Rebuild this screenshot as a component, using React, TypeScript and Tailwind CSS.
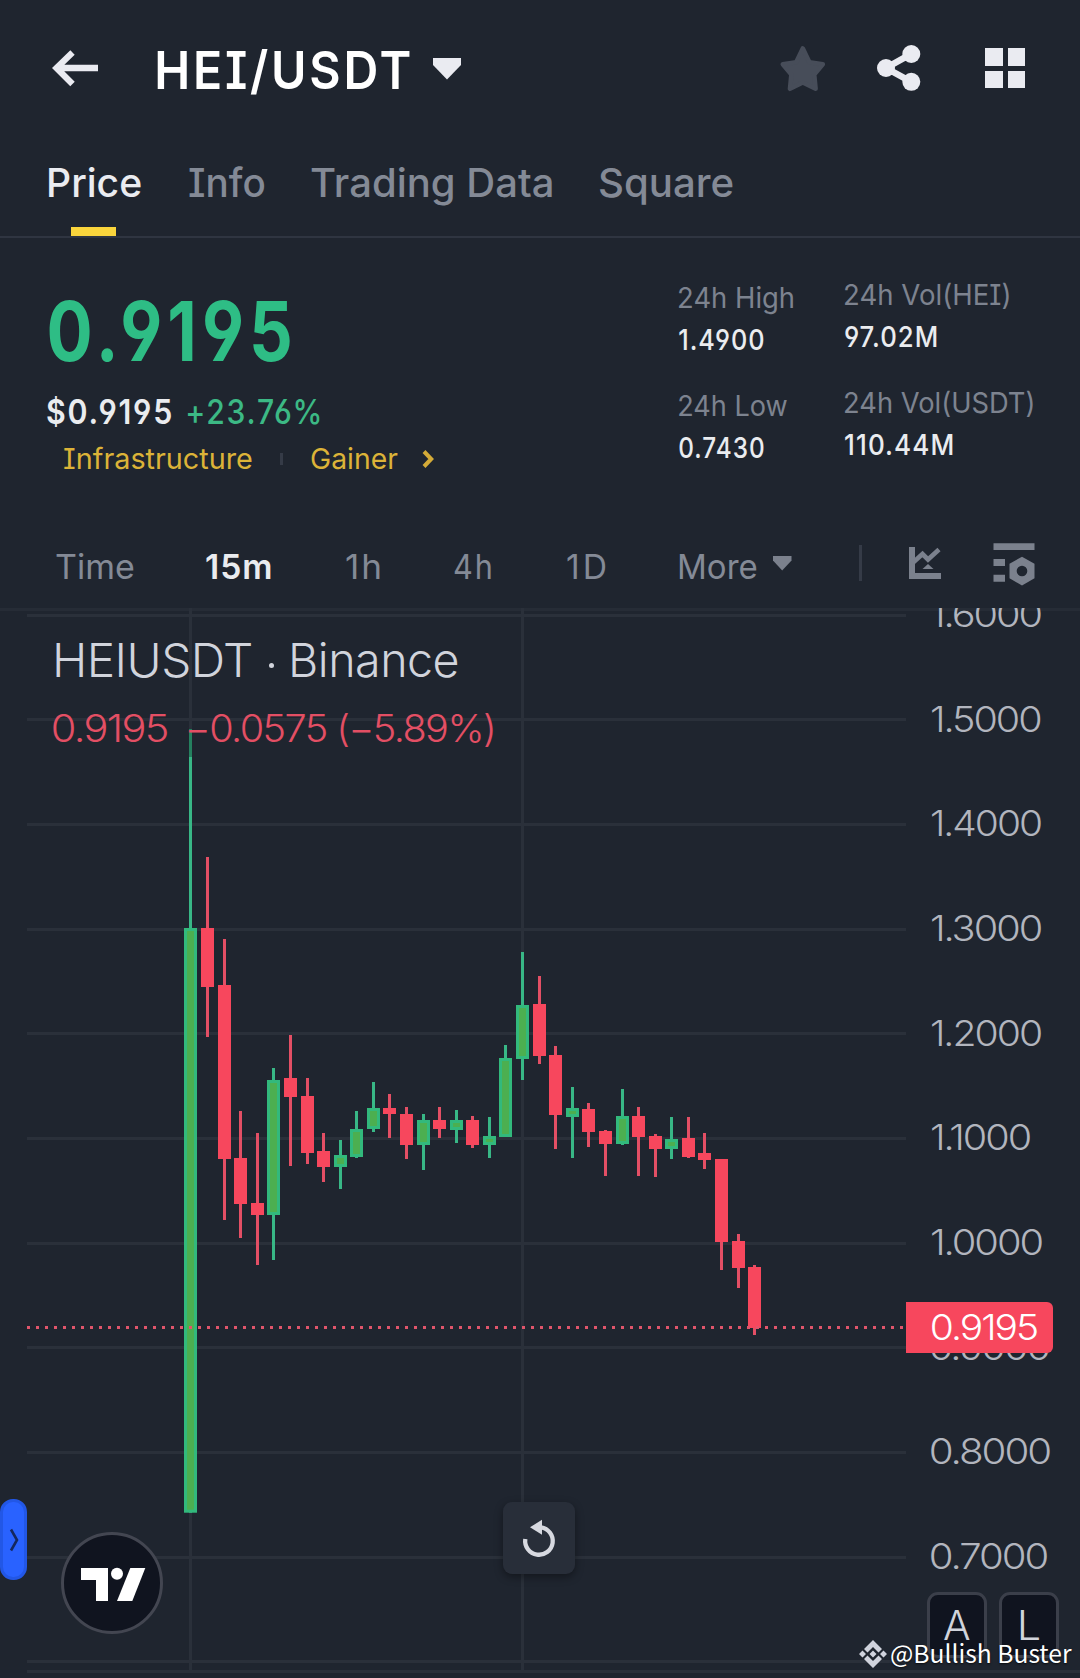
import { useLayoutEffect, useRef, type ReactNode } from "react";

/** Single line of text whose visible glyphs span exactly the width of its box. */
function Fit({ className = "", children }: { className?: string; children: string }) {
  const box = useRef<HTMLDivElement>(null);
  const text = useRef<HTMLSpanElement>(null);

  useLayoutEffect(() => {
    const b = box.current;
    const t = text.current;
    if (!b || !t) return;
    const cs = getComputedStyle(t);
    const ctx = document.createElement("canvas").getContext("2d");
    if (!ctx) return;
    ctx.font = `${cs.fontWeight} ${cs.fontSize} ${cs.fontFamily}`;
    const first = ctx.measureText(children[0]);
    const last = ctx.measureText(children[children.length - 1]);
    const spacing = parseFloat(cs.letterSpacing) || 0;
    const left = -first.actualBoundingBoxLeft;
    const right = last.width - last.actualBoundingBoxRight;
    t.style.transform = "none";
    const ink = t.getBoundingClientRect().width - spacing - left - right;
    const scale = b.getBoundingClientRect().width / ink;
    t.style.transform = `scaleX(${scale}) translateX(${-left}px)`;
  }, [children]);

  return (
    <div ref={box} className={`shrink-0 whitespace-pre ${className}`}>
      <span ref={text} className="inline-block origin-left">
        {children}
      </span>
    </div>
  );
}

const sans = "font-['Inter',sans-serif] [font-feature-settings:'cv08','cv03','cv04']";

type Candle = [x: number, high: number, top: number, bottom: number, low: number, up: 0 | 1];

const candles: Candle[] = [
  [190.5, 757, 928, 1512.7, 1512.7, 1],
  [207.5, 857, 928, 987, 1037, 0],
  [224.5, 939, 985, 1159, 1220, 0],
  [240.5, 1111, 1158, 1204, 1238, 0],
  [257.5, 1133, 1203, 1215, 1265, 0],
  [273.5, 1068, 1080, 1215, 1260, 1],
  [290.5, 1035, 1078, 1097, 1166, 0],
  [307.5, 1078, 1096, 1153, 1164, 0],
  [323.5, 1133, 1151, 1167, 1182, 0],
  [340.5, 1140, 1155, 1167, 1189, 1],
  [356.5, 1111, 1129, 1157, 1158, 1],
  [373.5, 1082, 1108, 1129, 1132, 1],
  [389.5, 1094, 1108, 1114, 1138, 0],
  [406.5, 1107, 1114, 1145, 1159, 0],
  [423.5, 1114, 1120, 1145, 1170, 1],
  [439.5, 1107, 1120, 1129, 1138, 0],
  [456.5, 1110, 1120, 1130, 1143, 1],
  [472.5, 1116, 1120, 1145, 1148, 0],
  [489.5, 1117, 1136, 1145, 1158, 1],
  [505.5, 1045, 1058, 1137, 1137, 1],
  [522.5, 952, 1005, 1059, 1080, 1],
  [539.5, 976, 1004, 1056, 1064, 0],
  [555.5, 1046, 1055, 1115, 1149, 0],
  [572.5, 1087, 1108, 1117, 1158, 1],
  [588.5, 1103, 1109, 1132, 1147, 0],
  [605.5, 1130, 1131, 1144, 1176, 0],
  [622.5, 1089, 1116, 1144, 1145, 1],
  [638.5, 1107, 1116, 1137, 1176, 0],
  [655.5, 1134, 1136, 1149, 1177, 0],
  [671.5, 1117, 1139, 1149, 1159, 1],
  [688.5, 1117, 1138, 1157, 1158, 0],
  [704.5, 1133, 1153, 1160, 1169, 0],
  [721.5, 1159, 1159, 1242, 1270, 0],
  [738.5, 1234, 1241, 1268, 1288, 0],
  [754.5, 1265, 1267, 1328, 1335, 0],
];

const gridRows = [615.5, 719.5, 824.5, 929.5, 1033.5, 1138.5, 1243.5, 1347.5, 1452.5, 1557.5, 1661.5];

function Chart() {
  return (
    <svg className="absolute inset-0" width="1080" height="1070" viewBox="0 608 1080 1070">
      <rect x="0" y="608" width="1080" height="3" fill="#262c36" />
      {gridRows.map((y) => (
        <rect key={y} x="27" y={y - 1.5} width="879" height="3" fill="#2a303a" />
      ))}
      <rect x="27" y="1670" width="1053" height="3" fill="#2a303a" />
      <rect x="189" y="608" width="3" height="1062" fill="#2a303a" />
      <rect x="521" y="608" width="3" height="1062" fill="#2a303a" />
      <rect x="189" y="729" width="3" height="28" fill="#25805f" />
      {candles.map(([x, high, top, bottom, low, up]) => (
        <g key={x}>
          <rect x={x - 1.5} y={high} width="3" height={low - high} fill={up ? "#38b786" : "#e34f65"} />
          <rect x={x - 6.5} y={top} width="13" height={bottom - top} fill={up ? "#32b97c" : "#f7475d"} />
          {up === 1 && (
            <rect x={x - 3.5} y={top + 3} width="7" height={Math.max(bottom - top - 6, 2)} fill="#4caf50" />
          )}
        </g>
      ))}
      <path d="M27 1327.5H905" stroke="#e0556b" strokeWidth="3" strokeDasharray="3 6" />
    </svg>
  );
}

function Tab({ children, className }: { children: string; className: string }) {
  return (
    <Fit className={`mt-[1px] h-[29px] text-[39.5px] leading-[29px] font-medium ${className}`}>{children}</Fit>
  );
}

function Stat({ label, value, labelWidth, valueWidth }: { label: string; value: string; labelWidth: string; valueWidth: string }) {
  return (
    <div className="flex h-[63px] flex-col justify-between">
      <Fit className={`h-[21px] text-[29px] leading-[21px] text-[#7d838f] ${labelWidth}`}>{label}</Fit>
      <Fit className={`h-[21px] text-[29px] leading-[21px] font-medium tracking-[1.2px] text-[#eaecef] ${valueWidth}`}>
        {value}
      </Fit>
    </div>
  );
}

function Interval({ children, className }: { children: string; className: string }) {
  return <Fit className={`mt-[54px] h-[25px] text-[34px] leading-[25px] ${className}`}>{children}</Fit>;
}

const axis: [string, string][] = [
  ["1.6000", "w-[110px]"],
  ["1.5000", "w-[109.5px]"],
  ["1.4000", "w-[110px]"],
  ["1.3000", "w-[110px]"],
  ["1.2000", "w-[110px]"],
  ["1.1000", "w-[99px]"],
  ["1.0000", "w-[111px]"],
  ["0.9000", "w-[118px]"],
  ["0.8000", "w-[119px]"],
  ["0.7000", "w-[116px]"],
];

function ScaleButton({ children }: { children: ReactNode }) {
  return (
    <div className="flex h-[66px] w-[60px] items-center justify-center rounded-[11px] border-3 border-[#3b3f4a] bg-[#10141f] pb-[1px] text-[#d1d4dc]">
      {children}
    </div>
  );
}

export default function App() {
  return (
    <div className={`flex h-[1678px] w-[1080px] flex-col overflow-hidden bg-[#1f252f] ${sans}`}>
      <header className="flex h-[168px] items-start">
        <svg className="mt-[49px] ml-[50px]" width="50" height="38" viewBox="50 49 50 38">
          <path d="M98 68H57M72.5 52.5L56.5 68L72.5 84" fill="none" stroke="#eaebf1" strokeWidth="6.3" />
        </svg>
        <Fit className="mt-[51px] ml-[57px] h-[38px] w-[253px] text-[52.3px] leading-[38px] font-semibold tracking-[3px] text-white">
          HEI/USDT
        </Fit>
        <svg className="mt-[58px] ml-[23px]" width="28" height="22" viewBox="0 0 28 22">
          <path d="M0 0H28V7L14 21.5L0 7Z" fill="#eaebf1" />
        </svg>
        <svg className="mt-[45px] ml-[317px]" width="50" height="48" viewBox="778 45 50 48">
          <path
            d="M802.8 48.5L809.4 62.2L822.8 64.2L814.2 74.6L815.6 88.8L802.8 82.5L790 88.8L791.4 74.6L782.8 64.2L796.2 62.2Z"
            fill="#474d59"
            stroke="#474d59"
            strokeWidth="4.6"
            strokeLinejoin="round"
          />
        </svg>
        <svg className="mt-[44px] ml-[47px]" width="48" height="48" viewBox="875 44 48 48">
          <path d="M911.3 53.8L886 68L911.3 81.9" fill="none" stroke="#eaebf1" strokeWidth="6.5" />
          <circle cx="886" cy="68" r="9" fill="#eaebf1" />
          <circle cx="911.3" cy="54" r="9" fill="#eaebf1" />
          <circle cx="911.3" cy="81.8" r="9" fill="#eaebf1" />
        </svg>
        <div className="mt-[48px] ml-[62px] grid h-[40px] w-[40px] grid-cols-2 gap-[5px]">
          <div className="bg-[#eaebf1]" />
          <div className="bg-[#eaebf1]" />
          <div className="bg-[#eaebf1]" />
          <div className="bg-[#eaebf1]" />
        </div>
      </header>

      <nav className="flex h-[70px] items-start border-b-2 border-[#2f3541] pl-[49px] text-[#848a96]">
        <div className="flex w-[92px] flex-col">
          <Tab className="w-[92px] text-[#eaecf1]">Price</Tab>
          <div className="mt-[29px] ml-[22px] h-[9px] w-[45px] bg-[#fad53c]" />
        </div>
        <Tab className="ml-[50px] w-[73px]">Info</Tab>
        <Tab className="ml-[47px] w-[241px]">Trading Data</Tab>
        <Tab className="ml-[48px] w-[133px]">Square</Tab>
      </nav>

      <section className="flex h-[262px] items-start">
        <div className="flex w-[679px] flex-col items-start pt-[64px]">
          <Fit className="ml-[49px] h-[60px] w-[241px] text-[82px] leading-[60px] font-bold tracking-[6px] text-[#2ebd85]">
            0.9195
          </Fit>
          <div className="mt-[37px] ml-[46.5px] flex h-[25px] gap-[17px]">
            <Fit className="w-[124px] text-[34px] leading-[25px] font-semibold tracking-[2px] text-[#eaecef]">$0.9195</Fit>
            <Fit className="w-[132px] text-[34px] leading-[25px] font-medium tracking-[2px] text-[#3cb985]">+23.76%</Fit>
          </div>
          <div className="mt-[24px] ml-[65px] flex h-[21px] items-center text-[29px] leading-[21px] text-[#dcb338]">
            <Fit className="w-[187px]">Infrastructure</Fit>
            <div className="ml-[28px] h-[12px] w-[3px] bg-[#353b47]" />
            <Fit className="ml-[28px] w-[87px]">Gainer</Fit>
            <svg className="ml-[24px]" width="13" height="18" viewBox="0 0 13 18">
              <path d="M2 1.5L9.2 9L2 16.5" fill="none" stroke="#d4ab38" strokeWidth="4" />
            </svg>
          </div>
        </div>
        <div className="flex w-[166px] flex-col gap-[45px] pt-[49px]">
          <Stat label="24h High" value="1.4900" labelWidth="w-[114px]" valueWidth="w-[85px]" />
          <Stat label="24h Low" value="0.7430" labelWidth="w-[108px]" valueWidth="w-[85px]" />
        </div>
        <div className="flex flex-col gap-[45px] pt-[46px]">
          <Stat label="24h Vol(HEI)" value="97.02M" labelWidth="w-[164px]" valueWidth="w-[92px]" />
          <Stat label="24h Vol(USDT)" value="110.44M" labelWidth="w-[188px]" valueWidth="w-[108px]" />
        </div>
      </section>

      <div className="flex h-[108px] items-start text-[#848a96]">
        <Interval className="ml-[56px] w-[78px]">Time</Interval>
        <Interval className="ml-[72px] w-[65px] font-semibold tracking-[1px] text-[#eaecef]">15m</Interval>
        <Interval className="ml-[75px] w-[34px] tracking-[2px]">1h</Interval>
        <Interval className="ml-[73.5px] w-[37px] tracking-[2px]">4h</Interval>
        <Interval className="ml-[76px] w-[38.5px] tracking-[3px]">1D</Interval>
        <Interval className="ml-[74px] w-[78px]">More</Interval>
        <svg className="mt-[56px] ml-[16px]" width="19" height="15" viewBox="0 0 19 15">
          <path d="M0 0H18.5V4.5L9.2 14.5L0 4.5Z" fill="#7b818d" />
        </svg>
        <div className="mt-[45px] ml-[67px] h-[36px] w-[3px] bg-[#353b47]" />
        <svg className="mt-[45px] ml-[45px]" width="36" height="36" viewBox="907 545 36 36" fill="#7b818d">
          <path d="M909 547H915V573H941V579H909Z" />
          <path d="M912 563.5L922.5 554L928 559.5L939 549.5" fill="none" stroke="#7b818d" strokeWidth="4.6" />
          <path d="M928 564L933.5 569H922.5Z" />
        </svg>
        <svg className="mt-[42px] ml-[49px]" width="44" height="45" viewBox="992 542 44 45" fill="#7b818d">
          <path d="M993.5 543.3H1034.5V550H993.5ZM993.5 559H1005V566H993.5ZM993.5 574.7H1005V581.7H993.5Z" />
          <path
            fillRule="evenodd"
            d="M1022 556.7L1034.5 563.7V578.3L1022 585.5L1009.5 578.3V563.7ZM1022 565.7A5.3 5.3 0 1 0 1022 576.3A5.3 5.3 0 1 0 1022 565.7Z"
          />
        </svg>
      </div>

      <main className="relative flex h-[1070px] overflow-hidden">
        <Chart />

        <div className="relative flex w-[931px] flex-col pt-[35px] [font-feature-settings:normal]">
          <div className="ml-[56px] flex h-[34px] items-center text-[46.8px] leading-[34px] font-light tracking-[-0.5px] text-[#d1d4dc]">
            <Fit className="w-[195.5px]">HEIUSDT</Fit>
            <div className="mt-[10px] ml-[17px] h-[5px] w-[5px] rounded-full bg-[#d1d4dc]" />
            <Fit className="ml-[18.5px] w-[165.5px]">Binance</Fit>
          </div>
          <div className="mt-[37.5px] ml-[52.5px] flex h-[27px] gap-[21.5px] text-[37.5px] leading-[27px] font-light tracking-[-1.5px] text-[#e34f64]">
            <Fit className="w-[114px]">0.9195</Fit>
            <Fit className="w-[304.5px]">−0.0575 (−5.89%)</Fit>
          </div>
        </div>

        <div className="relative mt-[-45.3px] flex flex-col font-light tracking-[-1.8px] text-[#b2b5be] [font-feature-settings:normal]">
          {axis.map(([label, width]) => (
            <div key={label} className="flex h-[104.65px] shrink-0 items-center">
              <Fit className={`h-[26px] text-[35.5px] leading-[26px] ${width}`}>{label}</Fit>
            </div>
          ))}
        </div>

        <div className="absolute top-[694px] left-[906px] flex h-[51px] w-[147px] items-center rounded-r-[6px] bg-[#f7475d] pl-[25.5px]">
          <Fit className="h-[26px] w-[105px] text-[35.5px] leading-[26px] font-light tracking-[-1.8px] text-white [font-feature-settings:normal]">
            0.9195
          </Fit>
        </div>

        <div className="absolute top-[984px] left-[927px] flex gap-[12px] text-[41px] leading-[30px] font-light">
          <ScaleButton>
            <Fit className="w-[26px]">A</Fit>
          </ScaleButton>
          <ScaleButton>
            <Fit className="w-[19px]">L</Fit>
          </ScaleButton>
        </div>

        <div className="absolute top-[894px] left-[503px] h-[72px] w-[72px] rounded-[9px] bg-[#282e39] shadow-[0_3px_9px_rgba(0,0,0,0.4)]">
          <svg width="72" height="72" viewBox="503 1502 72 72">
            <path d="M525.3 1539A13.8 13.8 0 1 0 541 1527.3" fill="none" stroke="#d7d9e0" strokeWidth="4.3" />
            <path d="M530 1527.3L542 1519.8V1534.8Z" fill="#d7d9e0" />
          </svg>
        </div>

        <div className="absolute top-[891px] left-0 flex h-[81px] w-[27px] items-center justify-center rounded-[13px] border-3 border-[#2257e6] bg-[#2962ff]">
          <svg width="10" height="24" viewBox="0 0 10 24">
            <path d="M2 1.5L8 12L2 22.5" fill="none" stroke="#14275f" strokeWidth="2.6" />
          </svg>
        </div>

        <div className="absolute top-[924px] left-[61px] h-[102px] w-[102px] rounded-full border-3 border-[#434651] bg-[#10141f]">
          <svg width="96" height="96" viewBox="64 1535 96 96" fill="#fff">
            <path d="M81 1568H108V1601H96V1580H81Z" />
            <circle cx="117" cy="1573.8" r="6" />
            <path d="M130.3 1568H145.3L132.3 1601H117Z" />
          </svg>
        </div>

        <div className="absolute top-[1031px] left-[858px] flex items-center">
          <svg width="30" height="30" viewBox="0 0 30 30" fill="#d0d3dd">
            <path d="M15 1L24 10L20.5 13.5L15 8L9.5 13.5L6 10ZM15 29L24 20L20.5 16.5L15 22L9.5 16.5L6 20ZM15 11.5L18.5 15L15 18.5L11.5 15ZM4.5 11.5L8 15L4.5 18.5L1 15ZM25.5 11.5L29 15L25.5 18.5L22 15Z" />
          </svg>
          <Fit className="ml-[3px] h-[30px] w-[181px] font-['Noto_Sans_CJK_SC',sans-serif] text-[24.5px] leading-[27px] text-white [text-shadow:0_1px_2px_rgba(0,0,0,0.7)]">
            @Bullish Buster
          </Fit>
        </div>
      </main>
    </div>
  );
}
